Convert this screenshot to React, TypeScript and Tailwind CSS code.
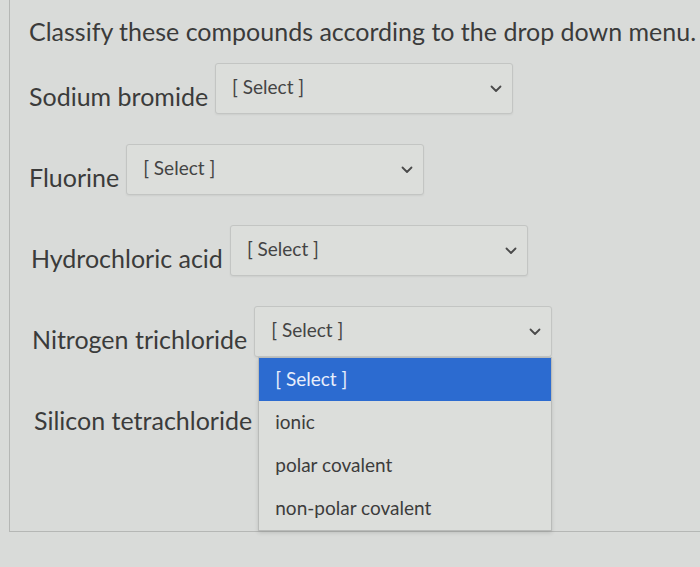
const font = { fontFamily: "Lato, 'Open Sans', sans-serif" };

const rows = [
  { label: "Sodium bromide", shift: "ml-0" },
  { label: "Fluorine", shift: "ml-0" },
  { label: "Hydrochloric acid", shift: "ml-[2px]" },
  { label: "Nitrogen trichloride", shift: "ml-[3px]", open: true },
  { label: "Silicon tetrachloride", shift: "ml-[5px]", covered: true },
];

const options = ["[ Select ]", "ionic", "polar covalent", "non-polar covalent"];

function Chevron() {
  return (
    <svg width="12" height="8" viewBox="0 0 12 8" className="shrink-0">
      <path d="M1.5 1.5 L6 6 L10.5 1.5" fill="none" stroke="#4a4a4a" strokeWidth="1.8" strokeLinecap="round" strokeLinejoin="round" />
    </svg>
  );
}

function Dropdown({ open, covered }: { open?: boolean; covered?: boolean }) {
  // the last select sits under the open list, so only its space is kept
  if (covered) return <div className="w-[290px] h-[51px]" />;
  return (
    <div className="relative">
      <div className="w-[298px] h-[51px] border border-[#c3c5c3] rounded-[3px] bg-[#dcdedb] flex items-center justify-between pl-[16px] pr-[10px] shadow-[0_1px_2px_rgba(0,0,0,0.06)]">
        <span className="text-[19px] text-[#444] -mt-[3px]">[ Select ]</span>
        <Chevron />
      </div>
      {open && (
        <ul className="absolute top-full left-[4px] right-0 border border-[#b9bbb9] bg-[#dcdedb] z-10 shadow-[0_2px_4px_rgba(0,0,0,0.12)]">
          {options.map((o, i) => (
            <li
              key={o}
              className={
                i === 0
                  ? "h-[43px] flex items-center pl-[16px] bg-[#2c6bd0] text-[#e8eefb] text-[19px]"
                  : "h-[43px] flex items-center pl-[16px] text-[#3c3c3c] text-[19px]"
              }
            >
              {o}
            </li>
          ))}
        </ul>
      )}
    </div>
  );
}

export default function App() {
  return (
    <div className="w-[700px] h-[567px] overflow-hidden bg-[#d9dbd9]" style={font}>
      <div className="ml-[9px] h-[532px] border-l border-b border-[#b5b7b5] pl-[19px] pt-[15px]">
        <h1 className="text-[25px] leading-[32px] text-[#3b3b3b] whitespace-nowrap">
          Classify these compounds according to the drop down menu.
        </h1>
        <div className="mt-[16px] flex flex-col gap-[30px]">
          {rows.map((r) => (
            <div key={r.label} className={`flex items-start gap-[7px] ${r.shift}`}>
              <span className="text-[25px] leading-[30px] text-[#3b3b3b] pt-[18px] whitespace-nowrap">{r.label}</span>
              <Dropdown open={r.open} covered={r.covered} />
            </div>
          ))}
        </div>
      </div>
    </div>
  );
}
